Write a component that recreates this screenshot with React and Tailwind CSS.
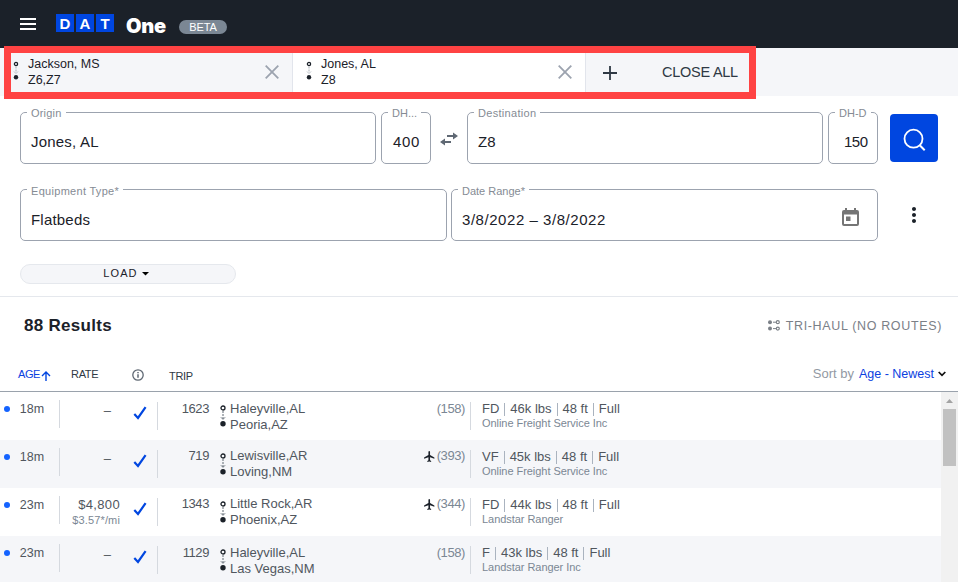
import { MdFlight, MdMoreVert } from "react-icons/md";

const tabs = [
  { from: "Jackson, MS", to: "Z6,Z7", active: false },
  { from: "Jones, AL", to: "Z8", active: true },
];

const loads = [
  { age: "18m", trip: "1623", from: "Haleyville,AL", to: "Peoria,AZ", dh: "(158)", specs: ["FD", "46k lbs", "48 ft", "Full"], company: "Online Freight Service Inc" },
  { age: "18m", trip: "719", from: "Lewisville,AR", to: "Loving,NM", dh: "(393)", plane: true, specs: ["VF", "45k lbs", "48 ft", "Full"], company: "Online Freight Service Inc" },
  { age: "23m", rate: "$4,800", perMile: "$3.57*/mi", trip: "1343", from: "Little Rock,AR", to: "Phoenix,AZ", dh: "(344)", plane: true, specs: ["FD", "44k lbs", "48 ft", "Full"], company: "Landstar Ranger" },
  { age: "23m", trip: "1129", from: "Haleyville,AL", to: "Las Vegas,NM", dh: "(158)", specs: ["F", "43k lbs", "48 ft", "Full"], company: "Landstar Ranger Inc" },
];

const TripIcon = ({ className, tall }) => (
  <svg className={className} width="6" height={tall ? 22 : 19} viewBox={tall ? "0 0 6 22" : "0 0 6 19"} fill="none">
    <circle cx="3" cy="3" r={tall ? 2 : 1.6} stroke="#1b2129" strokeWidth="1.3" />
    {tall ? (
      <>
        <path d="M3 6v8" stroke="#5f6873" strokeDasharray="2 1" />
        <path d="M.8 12.2L3 14.4l2.2-2.2" stroke="#5f6873" strokeWidth=".8" />
        <circle cx="3" cy="18.8" r="2.7" fill="#1b2129" />
      </>
    ) : (
      <>
        <path d="M3 5.5v6" stroke="#a9b0b8" strokeDasharray="2 1" />
        <path d="M1 10.5l2 2 2-2" stroke="#a9b0b8" strokeWidth=".8" />
        <circle cx="3" cy="16.2" r="2.2" fill="#1b2129" />
      </>
    )}
  </svg>
);

const Field = ({ label, value, className, valueClass = "px-[10px]", labelClass = "", children }) => (
  <fieldset className={`h-[60px] min-w-0 shrink-0 rounded-[5px] border border-[#9ca3af] ${className}`}>
    <legend className="ml-[6px] h-4 px-1 text-[11px] leading-4 whitespace-nowrap text-[#858b94]">
      <span className={`relative ${labelClass}`}>{label}</span>
    </legend>
    <div className={`flex h-[43px] items-center justify-between text-[15px] text-[#1b2129] ${valueClass}`}>
      <span>{value}</span>
      {children}
    </div>
  </fieldset>
);

const Header = () => (
  <header className="flex h-12 items-center bg-[#1b2129] pl-5">
    <svg width="16" height="12" viewBox="0 0 16 12" fill="#fff">
      <path d="M0 0h16v2H0zM0 5h16v2H0zM0 10h16v2H0z" />
    </svg>
    <div className="ml-5 flex gap-[2px] self-start pt-[14px]">
      {["D", "A", "T"].map((letter) => (
        <span
          key={letter}
          className="flex h-[18px] w-[18px] shrink-0 items-center justify-center bg-[#0046e0] text-[15px] leading-none font-bold text-white"
        >
          {letter}
        </span>
      ))}
    </div>
    <h1 className="ml-3 w-[41px] pt-[3px] font-['Inter',sans-serif] text-[20px] leading-none font-black tracking-[-0.3px] text-white">
      One
    </h1>
    <span className="mt-[6px] ml-3 flex h-[14px] w-12 items-center justify-center rounded-full bg-[#7b8794] text-[11px] leading-none tracking-[-0.1px] text-white">
      BETA
    </span>
  </header>
);

const SearchTabs = () => (
  <nav className="relative flex h-12 bg-[#f5f6f9]">
    {tabs.map((tab) => (
      <div
        key={tab.from}
        className={`flex h-12 w-[293px] items-center border-r border-[#e2e5ec] pl-[13px] ${tab.active ? "bg-white" : ""}`}
      >
        <TripIcon className="mb-1" />
        <div className="mb-px ml-[9px] flex-1 text-[12.5px] leading-4 text-[#1b2129]">
          <div>{tab.from}</div>
          <div>{tab.to}</div>
        </div>
        <svg className="mr-[13px]" width="14" height="14" viewBox="0 0 14 14" stroke="#9ca3af" strokeWidth="1.8">
          <path d="M.7.7l12.6 12.6M13.3.7L.7 13.3" />
        </svg>
      </div>
    ))}
    <button className="flex items-center pt-[2px] pl-[17px]" aria-label="New search">
      <svg width="14" height="14" viewBox="0 0 14 14" stroke="#2f3944" strokeWidth="1.8">
        <path d="M7 0v14M0 7h14" />
      </svg>
    </button>
    <button className="ml-[45px] pt-px text-[14.5px] tracking-[-0.25px] text-[#2f3944]">CLOSE ALL</button>
    {/* Highlight frame over the tabs */}
    <div className="pointer-events-none absolute -top-[2px] left-1 h-[53px] w-[752px] border-7 border-[#ff4343]" />
  </nav>
);

const SearchForm = () => (
  <section className="h-[201px] border-b border-[#e5e8ed] pt-2 pl-5">
    <div className="flex">
      <Field label="Origin" value="Jones, AL" className="w-[356px]" labelClass="top-px tracking-[0.2px]" valueClass="px-[10px] pt-[2px] tracking-[0.2px]" />
      <Field label="DH..." value="400" className="ml-[5px] w-[50px]" labelClass="top-px" valueClass="pl-[11px] pt-[2px] tracking-[0.6px]" />
      <svg className="mt-7 ml-[9px]" width="18" height="14" viewBox="0 0 18 14" fill="#5f6873">
        <path d="M7 3h6V.5L18 4l-5 3.5V5H7zM11 9H5V6.5L0 10l5 3.5V11h6z" />
      </svg>
      <Field label="Destination" value="Z8" className="ml-[9px] w-[356px]" labelClass="top-px tracking-[0.3px]" valueClass="px-[10px] pt-[2px]" />
      <Field label="DH-D" value="150" className="ml-[5px] w-[50px]" labelClass="top-px" valueClass="pl-[15px] pt-[2px] tracking-[-0.5px]" />
      <button className="mt-[10px] ml-3 flex h-12 w-12 items-center justify-center rounded bg-[#0046e0]" aria-label="Search">
        <svg className="mt-[3px]" width="24" height="24" viewBox="0 0 24 24" fill="none" stroke="#fff" strokeWidth="1.8">
          <circle cx="11.5" cy="10.7" r="9" />
          <path d="M17.5 17l5.2 5.2" strokeWidth="2" />
        </svg>
      </button>
    </div>
    <div className="mt-[17px] flex">
      <Field label="Equipment Type*" value="Flatbeds" className="w-[427px]" labelClass="top-[2px] tracking-[0.3px]" valueClass="px-[10px] pt-1 tracking-[0.2px]" />
      <Field
        label="Date Range*"
        value="3/8/2022 – 3/8/2022"
        className="ml-1 w-[427px]"
        labelClass="top-[2px]"
        valueClass="pt-1 pr-[18px] pl-[10px] tracking-[0.55px]"
      >
        <svg className="mb-[7px]" width="17" height="18" viewBox="0 0 17 18" fill="#757575">
          <path
            fillRule="evenodd"
            d="M3 0h2v2h7V0h2v2h1a2 2 0 012 2v12a2 2 0 01-2 2H2a2 2 0 01-2-2V4a2 2 0 012-2h1zM2 6.5V16h13V6.5zM4 8.5h4.5v4.5H4z"
          />
        </svg>
      </Field>
      <MdMoreVert className="mt-[22px] ml-6 h-6 w-6 text-[#1b2129]" />
    </div>
    <button className="mt-[23px] flex h-5 w-[216px] items-center justify-center gap-1 rounded-full border border-[#e5e8ed] bg-[#f5f6f9] pr-1 pb-px text-[11px] tracking-[1.1px] text-[#1b2129]">
      LOAD
      <svg width="7" height="4" viewBox="0 0 7 4">
        <path d="M0 0h7L3.5 3.5z" />
      </svg>
    </button>
  </section>
);

const ResultsHeader = () => (
  <section className="flex h-[95px] flex-col border-b border-[#9aa2ac]">
    <div className="flex items-center justify-between pt-[17px] pr-4 pl-6">
      <h2 className="text-[17px] leading-6 font-bold tracking-[0.3px] text-[#1b2129]">88 Results</h2>
      <div className="flex items-center gap-[6px] text-[12.5px] tracking-[0.65px] text-[#7b8087]">
        <svg className="mb-px" width="12" height="11" viewBox="0 0 12 11" fill="none" stroke="#7b8087">
          <circle cx="2" cy="2.2" r="2" fill="#7b8087" stroke="none" />
          <circle cx="2" cy="8.6" r="2" fill="#7b8087" stroke="none" />
          <path d="M5 2.2h3M5 8.6h3" />
          <circle cx="9.8" cy="2.2" r="1.5" strokeWidth="1.2" />
          <circle cx="9.8" cy="8.6" r="1.5" strokeWidth="1.2" />
        </svg>
        TRI-HAUL (NO ROUTES)
      </div>
    </div>
    <div className="mt-6 flex h-6 items-center pl-[18px] text-[11px] text-[#2f3944]">
      <div className="flex w-[53px] items-center gap-px tracking-[-0.4px] text-[#0b41df]">
        AGE
        <svg className="mt-[3px]" width="10" height="10" viewBox="0 0 10 10" fill="none" stroke="#0046e0" strokeWidth="1.4">
          <path d="M5 10V1M1 5l4-4 4 4" />
        </svg>
      </div>
      <span className="w-[61px] tracking-[-0.3px]">RATE</span>
      <svg className="mt-px" width="12" height="12" viewBox="0 0 12 12" fill="none" stroke="#5f6873">
        <circle cx="6" cy="6" r="5.2" strokeWidth="1.3" />
        <path d="M6 5.2v3.6M6 3v1.2" strokeWidth="1.5" />
      </svg>
      <span className="mt-1 ml-[25px] tracking-[-0.3px]">TRIP</span>
      <div className="ml-auto flex items-center pr-3 text-[13px] text-[#9299a3]">
        Sort by
        <span className="ml-[5px] text-[12.5px] text-[#0b41df]">Age - Newest</span>
        <svg className="ml-1" width="8" height="6" viewBox="0 0 8 6" fill="none" stroke="#111" strokeWidth="1.7">
          <path d="M.7 1L4 4.4 7.3 1" />
        </svg>
      </div>
    </div>
  </section>
);

const LoadRow = ({ load }) => {
  // rows with the plane icon sit one pixel higher
  const textTop = load.plane ? "mt-2" : "mt-[9px]";

  return (
    <div className="flex h-12 items-start pl-1 text-[13px] leading-4 text-[#50565e] even:bg-[#f5f6f9]">
      <span className="mt-[14px] h-[6px] w-[6px] rounded-full bg-[#1463ff]" />
      <span className="mt-[9px] w-[43px] pl-px text-center text-[12.5px]">{load.age}</span>
      <div className="mt-2 ml-[6px] h-7 w-px bg-[#d5d9df]" />
      <div className="mt-[9px] w-[60px] text-right">
        <div className={load.rate ? "tracking-[0.35px]" : "pt-[2px] pr-[9px]"}>{load.rate || "–"}</div>
        {load.perMile && <div className="-mt-px text-[11px] leading-4 tracking-[0.15px] text-[#7b8794]">{load.perMile}</div>}
      </div>
      <svg className="mt-[14px] ml-[13px]" width="14" height="14" viewBox="0 0 14 14" fill="none" stroke="#0046e0" strokeWidth="2.2">
        <path d="M1.3 8l3.7 4L12.6 1.2" />
      </svg>
      <div className="mt-[10px] ml-[10px] h-7 w-px bg-[#d5d9df]" />
      <span className={`w-[51px] text-right tracking-[-0.4px] ${textTop}`}>{load.trip}</span>
      <TripIcon tall className="mt-[13px] ml-[11px]" />
      <div className={`ml-1 w-[130px] ${textTop}`}>
        <div>{load.from}</div>
        <div>{load.to}</div>
      </div>
      <div className={`flex w-[105px] items-center justify-end tracking-[-0.4px] text-[#7b8794] ${textTop}`}>
        {load.plane && <MdFlight className="mr-px h-[13px] w-[13px] text-[#1b2129]" />}
        {load.dh}
      </div>
      <div className="mt-[10px] ml-[5px] h-7 w-px bg-[#d5d9df]" />
      <div className="mt-[9px] ml-[11px]">
        <div className="flex items-center">
          {load.specs.map((spec, index) => (
            <span key={spec} className="flex items-center">
              {index > 0 && <span className="mx-[5px] h-[13px] w-px bg-[#aab3bf]" />}
              {spec}
            </span>
          ))}
        </div>
        <div className="-mt-px text-[11px] leading-[14px] tracking-[-0.05px] text-[#7b8794]">{load.company}</div>
      </div>
    </div>
  );
};

const App = () => (
  <main className="h-[582px] w-[958px] overflow-hidden bg-white font-['Liberation_Sans',Arial,sans-serif]">
    <Header />
    <SearchTabs />
    <SearchForm />
    <ResultsHeader />
    <div className="flex h-[190px]">
      <div className="h-[190px] flex-1 overflow-hidden">
        {loads.map((load) => (
          <LoadRow key={load.trip} load={load} />
        ))}
      </div>
      {/* Scrollbar */}
      <div className="flex w-[17px] flex-col items-center bg-[#f1f1f1]">
        <svg className="mt-[6px]" width="7" height="5" viewBox="0 0 7 5" fill="#a3a3a3">
          <path d="M0 5l3.5-4L7 5z" />
        </svg>
        <div className="mt-[6px] h-[57px] w-[13px] bg-[#c1c1c1]" />
      </div>
    </div>
  </main>
);

export default App;
